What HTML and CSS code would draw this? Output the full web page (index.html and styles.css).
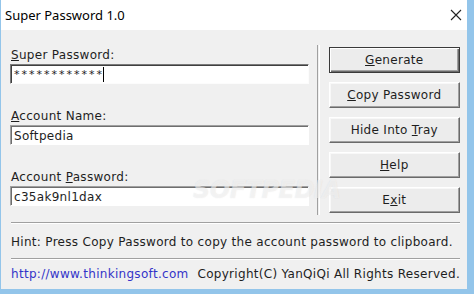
FILE: index.html
```html
<!DOCTYPE html>
<html lang="en">
<head>
    <meta charset="UTF-8">
    <title>Super Password 1.0</title>
    <link rel="stylesheet" href="styles.css">
</head>
<body>
    <div class="window">
        <div class="titlebar">
            <span class="title">Super Password 1.0</span>
            <svg class="close" width="12" height="12" viewBox="0 0 12 12">
                <path d="M1 1 L11 11 M11 1 L1 11" stroke="#222" stroke-width="1.1" fill="none"/>
            </svg>
        </div>
        <div class="client">
            <div class="main">
                <div class="fields">
                    <div class="field">
                        <label><u>S</u>uper Password:</label>
                        <div class="edit focus"><span class="stars">************</span><span class="caret"></span></div>
                    </div>
                    <div class="field">
                        <label><u>A</u>ccount Name:</label>
                        <div class="edit">Softpedia</div>
                    </div>
                    <div class="field">
                        <label>Account <u>P</u>assword:</label>
                        <div class="edit">c35ak9nl1dax</div>
                    </div>
                </div>
                <div class="vsep"></div>
                <div class="buttons">
                    <button class="btn default"><u>G</u>enerate</button>
                    <button class="btn"><u>C</u>opy Password</button>
                    <button class="btn">Hide Into <u>T</u>ray</button>
                    <button class="btn"><u>H</u>elp</button>
                    <button class="btn">E<u>x</u>it</button>
                </div>
            </div>
            <div class="hsep"></div>
            <p class="hint">Hint: Press Copy Password to copy the account password to clipboard.</p>
            <div class="hsep"></div>
            <p class="footer">
                <a href="#">http://www.thinkingsoft.com</a>
                <span>Copyright(C) YanQiQi All Rights Reserved.</span>
            </p>
        </div>
        <div class="watermark">SOFTPEDIA</div>
    </div>
</body>
</html>
```

FILE: styles.css
```css
body {
    margin: 0;
    width: 474px;
    height: 294px;
    background-color: #93c5ea;
    font-family: "DejaVu Sans", Verdana, sans-serif;
    font-size: 12px;
    letter-spacing: 0.3px;
    color: #1e1e1e;
    overflow: hidden;
}

.window {
    position: relative;
    margin: 0 7px 0 1px;
    height: 289px;
    display: flex;
    flex-direction: column;
    background-color: #f0f0f0;
    overflow: hidden;
}

.titlebar {
    height: 30px;
    flex: none;
    background-color: #fff;
    display: flex;
    align-items: center;
    justify-content: space-between;
    padding: 0 5px 0 4px;
}

.title {
    font-family: "Noto Sans", sans-serif;
    font-size: 13px;
    letter-spacing: 0;
    color: #000;
    margin-top: -1px;
}

.client {
    flex: 1;
    padding: 0 7px 0 9px;
}

.main {
    display: flex;
    height: 170px;
    padding-top: 15px;
}

.fields {
    width: 300px;
    padding-top: 3px;
    display: flex;
    flex-direction: column;
    gap: 25px;
}

.field label {
    display: block;
    height: 14px;
    line-height: 14px;
    margin-bottom: 2px;
    padding-left: 1px;
}

.edit {
    height: 20px;
    box-sizing: border-box;
    background-color: #fff;
    border: 1px solid;
    border-color: #a0a0a0 #fff #fff #a0a0a0;
    box-shadow: inset 1px 1px 0 #6e6e6e;
    padding: 1px 0 0 3px;
    line-height: 14px;
    display: flex;
    align-items: center;
}

.edit.focus {
    border-color: #7a7a7a #fcfcfc #fcfcfc #7a7a7a;
    box-shadow: inset 1px 1px 0 #404040;
}

.stars {
    font-size: 11px;
    letter-spacing: 2px;
    margin-top: 1px;
}

.caret {
    width: 1px;
    height: 15px;
    background-color: #000;
    margin-left: -1px;
}

.vsep {
    width: 1px;
    margin: 0 9px 0 8px;
    border-left: 1px solid #a0a0a0;
    border-right: 1px solid #fff;
}

.buttons {
    width: 132px;
    padding-top: 2px;
    display: flex;
    flex-direction: column;
    gap: 9px;
}

.btn {
    height: 26px;
    box-sizing: border-box;
    font: inherit;
    letter-spacing: inherit;
    color: #1e1e1e;
    background-color: #ececec;
    border: 1px solid;
    border-color: #fff #6a6a6a #6a6a6a #fff;
    box-shadow: inset -1px -1px 0 #a0a0a0, inset 1px 1px 0 #f8f8f8;
    padding: 0;
}

.btn.default {
    border: 1px solid #3a3a3a;
    box-shadow: inset 1px 1px 0 #fff, inset -1px -1px 0 #6a6a6a, inset -2px -2px 0 #a0a0a0;
}

.hsep {
    height: 0;
    border-top: 1px solid #a0a0a0;
    border-bottom: 1px solid #fff;
    margin-top: 7px;
    margin-left: 1px;
}

.hint {
    margin: 11px 0 9px 0;
    line-height: 14px;
    padding-left: 1px;
}

.hint + .hsep {
    margin-top: 0;
}

.footer {
    margin: 7px 0 0 0;
    line-height: 14px;
    display: flex;
    justify-content: space-between;
    padding-left: 1px;
}

.footer a {
    color: #3434c8;
    text-decoration: none;
}

.watermark {
    position: absolute;
    left: 192px;
    top: 176px;
    font-family: "DejaVu Sans", sans-serif;
    font-size: 24px;
    font-weight: bold;
    font-style: italic;
    letter-spacing: -0.5px;
    color: rgba(255, 255, 255, 0.5);
    text-shadow: 0 0 1px rgba(170, 170, 170, 0.3);
    pointer-events: none;
}
```
